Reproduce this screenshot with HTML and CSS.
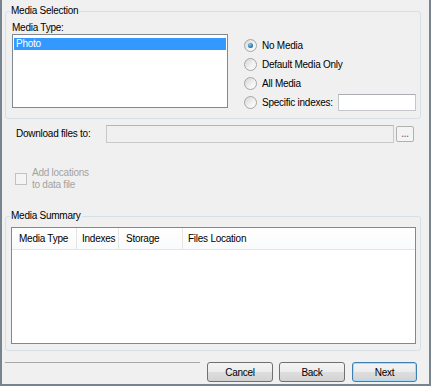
FILE: index.html
```html
<!DOCTYPE html>
<html>
<head>
<meta charset="utf-8">
<link rel="stylesheet" href="styles.css">
</head>
<body>
<div class="window">
  <div class="group group-selection">
    <div class="group-title">Media Selection</div>
    <div class="selection-body">
      <div class="type-col">
        <div class="field-label">Media Type:</div>
        <div class="listbox">
          <div class="list-item selected">Photo</div>
        </div>
      </div>
      <div class="radio-col">
        <div class="radio-row"><span class="radio checked"></span><span>No Media</span></div>
        <div class="radio-row"><span class="radio"></span><span>Default Media Only</span></div>
        <div class="radio-row"><span class="radio"></span><span>All Media</span></div>
        <div class="radio-row"><span class="radio"></span><span>Specific indexes:</span><span class="textbox indexes"></span></div>
      </div>
    </div>
  </div>

  <div class="download-row">
    <span class="download-label">Download files to:</span>
    <span class="textbox path"></span>
    <span class="browse-btn">...</span>
  </div>

  <div class="check-row">
    <span class="checkbox"></span>
    <span class="check-label">Add locations<br>to data file</span>
  </div>

  <div class="group group-summary">
    <div class="group-title">Media Summary</div>
    <div class="listview">
      <div class="lv-header">
        <span class="col c1">Media Type</span>
        <span class="col c2">Indexes</span>
        <span class="col c3">Storage</span>
        <span class="col c4">Files Location</span>
      </div>
    </div>
  </div>

  <div class="footer">
    <div class="status"></div>
    <button class="btn cancel">Cancel</button>
    <button class="btn back">Back</button>
    <button class="btn next">Next</button>
  </div>
</div>
</body>
</html>
```

FILE: styles.css
```css
html, body {
  margin: 0;
  padding: 0;
  background: #f0f0f0;
}

.window {
  width: 431px;
  height: 386px;
  box-sizing: border-box;
  border: 2px solid #77838f;
  border-top: 0;
  background: #f0f0f0;
  display: flex;
  flex-direction: column;
  font-family: "Liberation Sans", Arial, sans-serif;
  font-size: 10px;
  line-height: 12px;
  letter-spacing: -0.25px;
  color: #000;
}

.group {
  box-sizing: border-box;
  border: 1px solid #d5dfe5;
  border-radius: 3px;
  display: flex;
  flex-direction: column;
  flex: none;
}

.group-title {
  align-self: flex-start;
  margin: -7px 0 0 4px;
  padding: 0 1px;
  background: #f0f0f0;
}

.group-selection {
  margin: 11px 8px 0 3px;
  height: 108px;
}

.selection-body {
  display: flex;
}

.type-col {
  margin: 5px 0 0 6px;
  display: flex;
  flex-direction: column;
}

.listbox {
  width: 216px;
  height: 74px;
  box-sizing: border-box;
  border: 1px solid #828790;
  background: #fff;
  padding: 3px 1px;
}

.list-item {
  height: 12px;
  padding-left: 2px;
}

.list-item.selected {
  background: #3399ff;
  color: #fff;
}

.radio-col {
  margin: 19px 0 0 16px;
  display: flex;
  flex-direction: column;
}

.radio-row {
  height: 19px;
  display: flex;
  align-items: center;
}

.radio {
  width: 13px;
  height: 13px;
  box-sizing: border-box;
  border-radius: 50%;
  border: 1px solid #a6a6a6;
  background: linear-gradient(135deg, #d6d6d6 0%, #f3f3f3 60%, #fdfdfd 100%);
  margin-right: 5px;
  display: flex;
  align-items: center;
  justify-content: center;
  flex: none;
}

.radio.checked::after {
  content: "";
  width: 5px;
  height: 5px;
  border-radius: 50%;
  background: radial-gradient(circle at 40% 35%, #8fd0f2 0%, #2f7bb3 55%, #174f7c 100%);
}

.textbox {
  display: block;
  box-sizing: border-box;
  border: 1px solid #c3c6ca;
  border-top-color: #abadb3;
  flex: none;
}

.textbox.indexes {
  width: 78px;
  height: 17px;
  margin-left: 5px;
  background: #fff;
}

.download-row {
  margin: 6px 0 0 14px;
  height: 18px;
  display: flex;
  align-items: center;
  flex: none;
}

.download-label {
  width: 90px;
  flex: none;
}

.textbox.path {
  width: 288px;
  height: 18px;
  background: #f0f0f0;
  border-color: #c9c9c9;
  border-top-color: #b5b5b5;
}

.browse-btn {
  width: 18px;
  height: 16px;
  margin-left: 2px;
  box-sizing: border-box;
  border: 1px solid #adb2b5;
  border-radius: 2px;
  background: #f4f4f4;
  color: #7d7d7d;
  font-weight: bold;
  font-size: 9px;
  line-height: 14px;
  letter-spacing: 0;
  text-align: center;
  flex: none;
}

.check-row {
  margin: 24px 0 0 13px;
  display: flex;
  align-items: center;
  flex: none;
}

.checkbox {
  width: 12px;
  height: 12px;
  box-sizing: border-box;
  border: 1px solid #c2c2c2;
  background: #f4f4f4;
  margin-right: 5px;
  flex: none;
}

.check-label {
  color: #a3a3a3;
}

.group-summary {
  margin: 25px 8px 0 3px;
  height: 135px;
}

.listview {
  margin: 5px 4px 0 5px;
  height: 117px;
  box-sizing: border-box;
  border: 1px solid #828790;
  background: #fff;
}

.lv-header {
  height: 21px;
  display: flex;
  align-items: center;
  border-bottom: 1px solid #e5e5e5;
  background: linear-gradient(#ffffff, #f9fafb);
}

.col {
  box-sizing: border-box;
  height: 21px;
  line-height: 21px;
  border-right: 1px solid #e5e5e5;
  flex: none;
}

.c1 { width: 65px; padding-left: 7px; }
.c2 { width: 42px; padding-left: 5px; }
.c3 { width: 64px; padding-left: 7px; }
.c4 { flex: 1; padding-left: 5px; border-right: 0; }

.footer {
  margin-top: 11px;
  height: 20px;
  display: flex;
  flex: none;
}

.status {
  width: 195px;
  margin-left: 3px;
  border-top: 1px solid #a7a7a7;
  flex: none;
}

.btn {
  height: 20px;
  box-sizing: border-box;
  border: 1px solid #707070;
  border-radius: 3px;
  background: linear-gradient(#f4f4f4 0%, #ececec 50%, #dedede 51%, #d2d2d2 100%);
  font-family: inherit;
  font-size: 10px;
  letter-spacing: -0.25px;
  color: #000;
  padding: 0;
  flex: none;
}

.cancel { width: 66px; margin-left: 7px; }
.back { width: 66px; margin-left: 6px; }
.next {
  width: 65px;
  margin-left: 7px;
  border-color: #3c7fb1;
  box-shadow: inset 0 0 0 1px #a8dcf5;
}
```
